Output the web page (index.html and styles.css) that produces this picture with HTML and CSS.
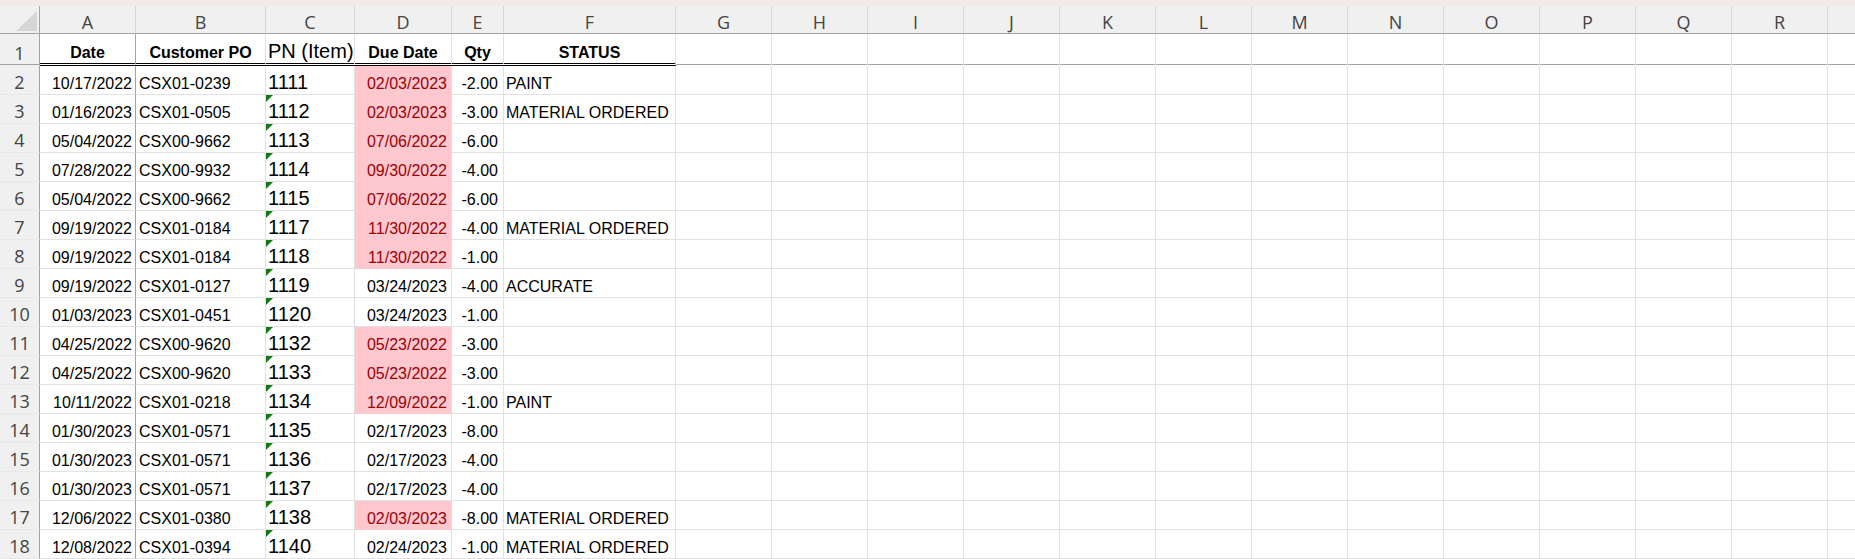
FILE: index.html
```html
<!DOCTYPE html>
<html lang="en">

<head>
  <meta charset="UTF-8">
  <meta name="viewport" content="width=device-width, initial-scale=1.0">
  <title>Open Orders - Sheet1</title>
  <link rel="stylesheet" href="styles.css">
</head>

<body>

  <!-- ribbon edge above the grid -->
  <div class="strip"></div>

  <!-- the worksheet, filled in by the script below -->
  <div class="sheet" id="sheet"></div>

  <script>
    const sheet = document.getElementById("sheet");
    // last column is only partly on screen, its letter is out of view
    const letters = ["A", "B", "C", "D", "E", "F", "G", "H", "I", "J", "K", "L", "M", "N", "O", "P", "Q", "R", ""];

    // date, customer PO, PN, due date, overdue?, qty, status
    const orders = [
      ["10/17/2022", "CSX01-0239", "1111", "02/03/2023", true, "-2.00", "PAINT"],
      ["01/16/2023", "CSX01-0505", "1112", "02/03/2023", true, "-3.00", "MATERIAL ORDERED"],
      ["05/04/2022", "CSX00-9662", "1113", "07/06/2022", true, "-6.00", ""],
      ["07/28/2022", "CSX00-9932", "1114", "09/30/2022", true, "-4.00", ""],
      ["05/04/2022", "CSX00-9662", "1115", "07/06/2022", true, "-6.00", ""],
      ["09/19/2022", "CSX01-0184", "1117", "11/30/2022", true, "-4.00", "MATERIAL ORDERED"],
      ["09/19/2022", "CSX01-0184", "1118", "11/30/2022", true, "-1.00", ""],
      ["09/19/2022", "CSX01-0127", "1119", "03/24/2023", false, "-4.00", "ACCURATE"],
      ["01/03/2023", "CSX01-0451", "1120", "03/24/2023", false, "-1.00", ""],
      ["04/25/2022", "CSX00-9620", "1132", "05/23/2022", true, "-3.00", ""],
      ["04/25/2022", "CSX00-9620", "1133", "05/23/2022", true, "-3.00", ""],
      ["10/11/2022", "CSX01-0218", "1134", "12/09/2022", true, "-1.00", "PAINT"],
      ["01/30/2023", "CSX01-0571", "1135", "02/17/2023", false, "-8.00", ""],
      ["01/30/2023", "CSX01-0571", "1136", "02/17/2023", false, "-4.00", ""],
      ["01/30/2023", "CSX01-0571", "1137", "02/17/2023", false, "-4.00", ""],
      ["12/06/2022", "CSX01-0380", "1138", "02/03/2023", true, "-8.00", "MATERIAL ORDERED"],
      ["12/08/2022", "CSX01-0394", "1140", "02/24/2023", false, "-1.00", "MATERIAL ORDERED"]
    ];

    function cell(cls, text) {
      let d = document.createElement("div");
      d.className = cls;
      if (text) d.textContent = text;
      sheet.appendChild(d);
      return d;
    }

    function blanks(cls) {
      for (let i = 6; i < letters.length; i++) cell(cls);
    }

    // column letters
    let corner = cell("hd corner");
    corner.innerHTML = '<svg width="21" height="20" viewBox="0 0 21 20"><polygon points="21,0 21,20 0,20" fill="#d6d6d6"/></svg>';
    letters.forEach(l => cell("hd", l));

    // row 1: titles
    cell("rh frz", "1");
    cell("cell title", "Date");
    cell("cell title", "Customer PO");
    cell("cell title-pn", "PN (Item)");
    cell("cell title", "Due Date");
    cell("cell title", "Qty");
    cell("cell title", "STATUS");
    blanks("cell frz");

    // rows 2..18
    orders.forEach((o, i) => {
      cell("rh", String(i + 2));
      cell("cell c-date", o[0]);
      cell("cell c-po", o[1]);
      cell(i > 0 ? "cell c-pn as-text" : "cell c-pn", o[2]);
      cell(o[4] ? "cell c-due bad" : "cell c-due", o[3]);
      cell("cell c-qty", o[5]);
      cell("cell c-status", o[6]);
      blanks("cell");
    });
  </script>

</body>

</html>
```

FILE: styles.css
```css
body {
  margin: 0;
  font-family: "Liberation Sans", Arial, sans-serif;
  background: #fff;
  overflow: hidden;
}

.strip {
  height: 6px;
  background: #f2eae8;
}

.sheet {
  display: grid;
  grid-template-columns: 40px 96px 130px 89px 97px 52px 172px repeat(13, 96px);
  grid-template-rows: 28px 32px repeat(17, 29px);
  width: 1855px;
  overflow: hidden;
}

.hd,
.rh,
.cell {
  box-sizing: border-box;
  display: flex;
  align-items: flex-end;
  white-space: nowrap;
  overflow: hidden;
  position: relative;
}

/* headers */
.hd {
  justify-content: center;
  background: #f0f0f0;
  border-right: 1px solid #d8d8d8;
  border-bottom: 1px solid #a3a3a3;
  font-family: "Open Sans", sans-serif;
  font-size: 18px;
  line-height: 18px;
  color: #444;
  padding-bottom: 2px;
}

.corner {
  justify-content: flex-end;
  padding: 0 2px 2px 0;
  border-right-color: #a3a3a3;
}

.corner svg {
  display: block;
}

.rh {
  justify-content: center;
  background: #f0f0f0;
  border-right: 1px solid #a3a3a3;
  border-bottom: 1px solid #e8e8e8;
  font-family: "Open Sans", sans-serif;
  font-size: 18px;
  line-height: 18px;
  color: #444;
  padding-bottom: 3px;
}

/* cells */
.cell {
  border-right: 1px solid #e1e1e1;
  border-bottom: 1px solid #e1e1e1;
  font-size: 16px;
  line-height: 17px;
  color: #000;
  padding: 0 3px 2px;
}

/* frozen pane line under row 1 */
.frz {
  border-bottom-color: #fff;
  box-shadow: inset 0 -1px 0 #a3a3a3;
}

.rh.frz {
  border-bottom-color: #f0f0f0;
}

/* frozen pane line after column A */
.c-date,
.title:nth-child(22) {
  border-right-color: #a3a3a3;
}

.title,
.title-pn {
  border-bottom: 3px double #000;
}

.title {
  justify-content: center;
  font-weight: bold;
}

.title-pn,
.c-pn {
  font-size: 20px;
  line-height: 20px;
  padding-left: 2px;
}

.c-date {
  justify-content: flex-end;
}

.c-due {
  justify-content: flex-end;
  padding-right: 4px;
}

.c-qty {
  justify-content: flex-end;
  padding-right: 5px;
}

.c-status {
  padding-left: 2px;
}

.bad {
  background: #ffc7ce;
  color: #9c0006;
  border-bottom-color: #ffc7ce;
}

/* number stored as text marker */
.as-text::before {
  content: "";
  position: absolute;
  left: 0;
  top: 0;
  border-top: 7px solid #107c10;
  border-right: 7px solid transparent;
}
```
